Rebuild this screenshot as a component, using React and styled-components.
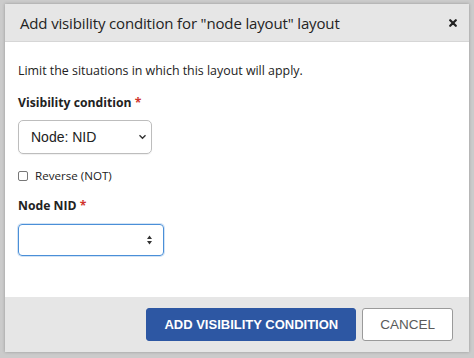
import React from "react";
import styled, { createGlobalStyle } from "styled-components";

const Global = createGlobalStyle`
  html, body { margin: 0; padding: 0; }
  body {
    width: 474px; height: 358px; overflow: hidden;
    background: #cbcbcb;
    font-family: "Open Sans", "Noto Sans", sans-serif;
  }
`;

const Page = styled.div`
  width: 474px; height: 358px;
  padding: 4px 5px 6px 5px;
  box-sizing: border-box;
  display: flex;
`;

const Dialog = styled.div`
  flex: 1;
  display: flex; flex-direction: column;
  background: #fff;
  box-shadow: 0 0 3px rgba(0,0,0,0.25);
`;

const Header = styled.div`
  height: 38px; box-sizing: border-box;
  background: #e6e6e6;
  border-bottom: 1px solid #d6d6d6;
  display: flex; align-items: center; justify-content: space-between;
  padding: 0 10px 0 15px;
`;

const Title = styled.h1`
  margin: 0; font-size: 15px; font-weight: 400; color: #232323;
  letter-spacing: -0.15px;
`;

const Close = styled.button`
  border: 0; background: none; padding: 0; width: 12px; height: 12px;
  display: flex; align-items: center; justify-content: center;
`;

const Body = styled.div`
  flex: 1;
  padding: 20px 13px 0 13px;
  display: flex; flex-direction: column; align-items: flex-start;
`;

const Intro = styled.p`
  margin: 0 0 14px 0; font-size: 12.4px; color: #222; line-height: 18px;
`;

const Label = styled.label`
  font-size: 12.2px; font-weight: 700; color: #222; line-height: 18px;
  margin-bottom: ${p => p.$mb || 8}px;
  span { color: #d0342c; }
`;

const Select = styled.div`
  width: 134px; height: 34px; box-sizing: border-box;
  border: 1px solid #bdbdbd; border-radius: 5px;
  box-shadow: 0 1px 1px rgba(0,0,0,0.06);
  display: flex; align-items: center; justify-content: space-between;
  padding: 0 4px 0 12px;
  font-family: "Liberation Sans", Arial, sans-serif; font-size: 14px; color: #222;
`;

const CheckRow = styled.div`
  display: flex; align-items: center; gap: 7px;
  margin: 14px 0 13px 0;
  font-size: 11.6px; color: #222; line-height: 16px;
`;

const Box = styled.span`
  width: 8px; height: 8px; border: 1px solid #777; border-radius: 2px; background: #fff;
`;

const Input = styled.div`
  width: 146px; height: 32px; box-sizing: border-box;
  border: 1px solid #4a8fd8; border-radius: 4px;
  box-shadow: 0 0 0 1px rgba(74,143,216,0.25);
  display: flex; align-items: center; justify-content: flex-end;
  padding-right: 10px;
`;

const Footer = styled.div`
  height: 55px; box-sizing: border-box;
  background: #e6e6e6;
  display: flex; align-items: center; justify-content: flex-end; gap: 6px;
  padding: 0 16px 1px 0;
`;

const Button = styled.button`
  height: 33px; box-sizing: border-box;
  font-family: "Liberation Sans", Arial, sans-serif;
  font-size: ${p => p.$primary ? 13 : 13.5}px; text-transform: uppercase;
  border-radius: 3px; cursor: pointer;
  padding: 0 17px;
  background: ${p => p.$primary ? "#2d57a3" : "#fff"};
  color: ${p => p.$primary ? "#fff" : "#5a5a5a"};
  border: 1px solid ${p => p.$primary ? "#2d57a3" : "#9a9a9a"};
  font-weight: ${p => p.$primary ? 700 : 400};
`;

export default function App() {
  return (
    <>
      <Global />
      <Page>
        <Dialog>
          <Header>
            <Title>Add visibility condition for "node layout" layout</Title>
            <Close aria-label="Close">
              <svg width="8" height="8" viewBox="0 0 8 8">
                <path d="M1.2 1.2 L6.8 6.8 M6.8 1.2 L1.2 6.8" stroke="#222" strokeWidth="2.2" strokeLinecap="round" />
              </svg>
            </Close>
          </Header>
          <Body>
            <Intro>Limit the situations in which this layout will apply.</Intro>
            <Label>Visibility condition <span>*</span></Label>
            <Select>
              Node: NID
              <svg width="9" height="6" viewBox="0 0 9 6">
                <path d="M1.5 1.2 L4.5 4.2 L7.5 1.2" stroke="#333" strokeWidth="1.4" fill="none" />
              </svg>
            </Select>
            <CheckRow><Box />Reverse (NOT)</CheckRow>
            <Label $mb={9}>Node NID <span>*</span></Label>
            <Input>
              <svg width="7" height="12" viewBox="0 0 7 12">
                <path d="M3.5 1.5 L6 5 L1 5 Z M3.5 10.5 L6 7 L1 7 Z" fill="#333" />
              </svg>
            </Input>
          </Body>
          <Footer>
            <Button $primary>Add visibility condition</Button>
            <Button>Cancel</Button>
          </Footer>
        </Dialog>
      </Page>
    </>
  );
}
